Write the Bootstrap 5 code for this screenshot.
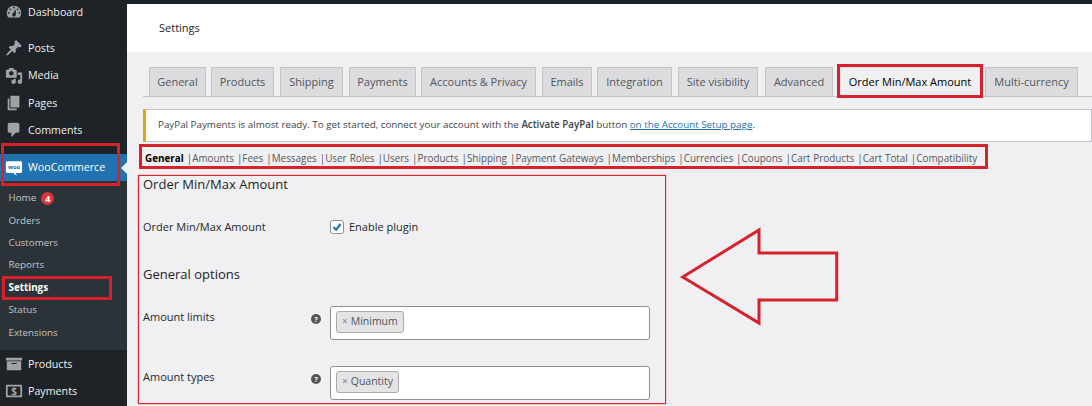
<!DOCTYPE html>
<html lang="en"><head><meta charset="utf-8"><title>Settings</title>
<link href="https://cdn.jsdelivr.net/npm/bootstrap@5.3.0/dist/css/bootstrap.min.css" rel="stylesheet">
<style>
html,body{height:406px;overflow:hidden}
body{background:#f0f0f3;font-family:"Open Sans","Noto Sans",sans-serif;font-size:11px;color:#3c434a;position:relative;width:1092px}
.wp-side{width:127px;height:406px;background:#1d2327;flex:none}
.wp-item{height:27.4px;color:#eef0f1;font-size:10.7px;padding-left:28px;position:relative;text-decoration:none}
.wp-item svg{position:absolute;left:5px;top:5px;width:18px;height:18px;fill:#9ea3a8}
.wp-first{height:24px;margin-bottom:10.2px}
.wp-first svg{top:3px}
.wp-active{background:#2271b1;color:#fff;margin-top:9.9px;height:27px}
.wp-active::after{content:"";position:absolute;right:0;top:8px;border:6px solid transparent;border-right-color:#f0f0f3;border-left:0}
.wp-sub{background:#2c3338;padding:6.6px 0 5.9px;height:169.4px}
.wp-sublink{height:22.5px;padding-left:8.5px;font-size:9.8px;color:#c3c4c7;text-decoration:none}
.wp-sublink.wp-on{color:#fff;font-weight:700}
.wp-count{background:#d63638;color:#fff;border-radius:50%;width:13px;height:13px;font-size:9px;font-weight:700;margin-left:5px;line-height:13px;text-align:center}
.wp-main{min-width:0}
.wp-strip{height:3.5px;background:#1d2327}
.wp-head{height:48.5px;background:#fff;padding-left:32px;font-size:11px;color:#1d2327}
.wc-tabs{margin:15px 0 0 16px;padding-left:6px;border-bottom:1px solid #c3c4c7;flex-wrap:nowrap;height:30px}
.wc-tabs .nav-link{background:#dcdcde;border:1px solid #c3c4c7;border-bottom:0;border-radius:0;color:#50575e;font-size:11px;font-weight:500;height:29px;padding:0;margin:0;display:flex;align-items:center;justify-content:center}
.wc-tabs .nav-link.active{background:#f0f0f3;color:#000;height:30px}
.wc-tabs .nav-item:nth-child(1) .nav-link{width:57px;margin-right:5px}
.wc-tabs .nav-item:nth-child(2) .nav-link{width:63px;margin-right:6px}
.wc-tabs .nav-item:nth-child(3) .nav-link{width:63px;margin-right:6px}
.wc-tabs .nav-item:nth-child(4) .nav-link{width:67px;margin-right:5px}
.wc-tabs .nav-item:nth-child(5) .nav-link{width:115px;margin-right:6px}
.wc-tabs .nav-item:nth-child(6) .nav-link{width:50px;margin-right:5px}
.wc-tabs .nav-item:nth-child(7) .nav-link{width:75px;margin-right:6px}
.wc-tabs .nav-item:nth-child(8) .nav-link{width:80px;margin-right:7px}
.wc-tabs .nav-item:nth-child(9) .nav-link{width:68px;margin-right:7px}
.wc-tabs .nav-item:nth-child(10) .nav-link{width:140px;margin-right:5px}
.wc-tabs .nav-item:nth-child(11) .nav-link{width:93px}
.wc-notice{margin:12px 0 0 16px;height:33px;background:#fff;border:1px solid #c3c4c7;border-left:3px solid #dba617;padding-left:12px;font-size:9.8px;color:#3c434a}
.wc-notice a,.wc-subnav a{color:#2271b1}
.wc-notice b{font-weight:600}
.wc-subnav{margin:9px 0 0 18px;height:14px;font-size:9.9px;white-space:nowrap;color:#50575e;line-height:14px;word-spacing:.45px}
.wc-subnav a{text-decoration:none}
.wc-subnav .wc-here{color:#000;font-weight:700}
.wc-form{margin:10px 0 0 16px;width:507px;font-size:11px;color:#23282d}
.wc-title{font-size:13px;font-weight:500;color:#1d2327;margin:0;line-height:18px}
.wc-row{display:flex}
.wc-gap-a{margin-top:26px}
.wc-gap-b{margin-top:29px}
.wc-gap-c{margin-top:23px}
.wc-gap-d{margin-top:26px}
.wc-label{width:187px;display:flex;justify-content:space-between;padding-right:9px;font-weight:400}
.wc-label-top{padding-top:3.5px}
.wc-help{width:10px;height:10px;margin-top:4.5px;fill:#555}
.wc-check{width:14px!important;height:14px;margin:0 5px 0 0!important;border:1px solid #8c8f94;border-radius:2px;background-color:#fff!important;border-color:#8c8f94!important;flex:none;background-size:12px;background-image:url("data:image/svg+xml,%3Csvg xmlns='http://www.w3.org/2000/svg' viewBox='0 0 20 20'%3E%3Cpath fill='none' stroke='%232271b1' stroke-width='3.500' d='M4 10l4.500 4.500L16 5'/%3E%3C/svg%3E")!important}
.wc-box{width:320px;height:34px;background:#fff;border:1px solid #8c8f94;border-radius:3px;padding:4px 5px}
.wc-tag{background:#e4e4e4;border:1px solid #aaa;border-radius:3px;height:22px;padding:0 5px;display:inline-flex;align-items:center;gap:3px;color:#50575e;font-size:10.5px}
.wc-x{color:#888;font-size:10px}
.mk-box{position:absolute;border:3px solid #d7222e;pointer-events:none}
.mk-woo{left:1px;top:143px;width:119px;height:43px}
.mk-set{left:2px;top:276px;width:110px;height:24px}
.mk-tab{left:837px;top:64px;width:146px;height:34px}
.mk-nav{left:139px;top:144px;width:849px;height:25px}
.mk-form{left:138px;top:175px;width:528px;height:229px;border:1px solid #e0202c;box-shadow:0 0 1px #e0202c}
.mk-arrow{position:absolute;left:678px;top:226px;width:164px;height:102px}
</style></head>
<body class="d-flex">
<aside class="wp-side d-flex flex-column">
<a class="wp-item wp-first d-flex align-items-center"><svg viewBox="0 0 20 20"><path d="M3.76 16h12.48c1.1-1.37 1.76-3.11 1.76-5 0-4.42-3.58-8-8-8s-8 3.58-8 8c0 1.89.66 3.63 1.76 5zM10 4c.55 0 1 .45 1 1s-.45 1-1 1-1-.45-1-1 .45-1 1-1zM6 6c.55 0 1 .45 1 1s-.45 1-1 1-1-.45-1-1 .45-1 1-1zm8 0c.55 0 1 .45 1 1s-.45 1-1 1-1-.45-1-1 .45-1 1-1zm-5.37 5.55L12 7v6c0 1.1-.9 2-2 2s-2-.9-2-2c0-.57.24-1.08.63-1.45zM4 10c.55 0 1 .45 1 1s-.45 1-1 1-1-.45-1-1 .45-1 1-1zm12 0c.55 0 1 .45 1 1s-.45 1-1 1-1-.45-1-1 .45-1 1-1z"/></svg>Dashboard</a>
<a class="wp-item d-flex align-items-center"><svg viewBox="0 0 20 20"><path d="M10.44 3.02l1.82-1.82 6.36 6.35-1.83 1.82c-1.05-.68-2.48-.57-3.41.36l-.75.75c-.92.93-1.04 2.35-.35 3.41l-1.83 1.82-2.41-2.41-2.8 2.79c-.42.42-3.38 2.71-3.8 2.29s1.86-3.39 2.28-3.81l2.79-2.79L4.1 9.36l1.83-1.82c1.05.69 2.48.57 3.4-.36l.75-.75c.93-.92 1.05-2.35.36-3.41z"/></svg>Posts</a>
<a class="wp-item d-flex align-items-center"><svg viewBox="0 0 20 20"><path d="M13 11V4c0-.55-.45-1-1-1h-1.67L9 1H5L3.67 3H2c-.55 0-1 .45-1 1v7c0 .55.45 1 1 1h10c.55 0 1-.45 1-1zM7 4.5c1.38 0 2.5 1.12 2.5 2.5S8.38 9.5 7 9.5 4.5 8.38 4.5 7 5.62 4.5 7 4.5zM14 6h5v10.5c0 1.38-1.12 2.5-2.5 2.5S14 17.88 14 16.5s1.12-2.5 2.5-2.5c.17 0 .34.02.5.05V9h-3V6zm-4 8.05V13h2v3.5c0 1.38-1.12 2.5-2.5 2.5S7 17.88 7 16.5 8.12 14 9.5 14c.17 0 .34.02.5.05z"/></svg>Media</a>
<a class="wp-item d-flex align-items-center"><svg viewBox="0 0 20 20"><path d="M6 15V2h10v13H6zm-1 1h8v2H3V5h2v11z"/></svg>Pages</a>
<a class="wp-item d-flex align-items-center"><svg viewBox="0 0 20 20"><path d="M5 2h9c1.1 0 2 .9 2 2v7c0 1.1-.9 2-2 2h-2l-5 5v-5H5c-1.1 0-2-.9-2-2V4c0-1.1.9-2 2-2z"/></svg>Comments</a>
<a class="wp-item wp-active d-flex align-items-center"><svg viewBox="0 0 20 20"><path style="fill:#fff" d="M2.5 2.5h15a1.5 1.5 0 0 1 1.5 1.5v10a1.5 1.5 0 0 1-1.5 1.5H12l1 3-4-3H2.500A1.500 1.500 0 0 1 1 14V4a1.500 1.500 0 0 1 1.500-1.500z"/><text x="10" y="11.500" text-anchor="middle" font-size="6.500" font-weight="700" style="fill:#2271b1">woo</text></svg>WooCommerce</a>
<div class="wp-sub d-flex flex-column">
<a class="wp-sublink d-flex align-items-center">Home<span class="wp-count">4</span></a>
<a class="wp-sublink d-flex align-items-center">Orders</a>
<a class="wp-sublink d-flex align-items-center">Customers</a>
<a class="wp-sublink d-flex align-items-center">Reports</a>
<a class="wp-sublink wp-on d-flex align-items-center">Settings</a>
<a class="wp-sublink d-flex align-items-center">Status</a>
<a class="wp-sublink d-flex align-items-center">Extensions</a>
</div>
<a class="wp-item d-flex align-items-center"><svg viewBox="0 0 20 20"><path d="M19 3v3H1V3h18zM2 7h16v10H2V7zm11 3V9H7v1h6z"/></svg>Products</a>
<a class="wp-item d-flex align-items-center"><svg viewBox="0 0 20 20"><path fill-rule="evenodd" d="M2 3h16a1 1 0 0 1 1 1v12a1 1 0 0 1-1 1H2a1 1 0 0 1-1-1V4a1 1 0 0 1 1-1zm1 2v10h14V5z"/><text x="10" y="14" text-anchor="middle" font-size="11" font-weight="700">$</text></svg>Payments</a>
</aside>
<main class="wp-main flex-grow-1">
<div class="wp-strip"></div>
<div class="wp-head d-flex align-items-center">Settings</div>
<ul class="nav nav-tabs wc-tabs">
<li class="nav-item"><a class="nav-link">General</a></li>
<li class="nav-item"><a class="nav-link">Products</a></li>
<li class="nav-item"><a class="nav-link">Shipping</a></li>
<li class="nav-item"><a class="nav-link">Payments</a></li>
<li class="nav-item"><a class="nav-link">Accounts &amp; Privacy</a></li>
<li class="nav-item"><a class="nav-link">Emails</a></li>
<li class="nav-item"><a class="nav-link">Integration</a></li>
<li class="nav-item"><a class="nav-link">Site visibility</a></li>
<li class="nav-item"><a class="nav-link">Advanced</a></li>
<li class="nav-item"><a class="nav-link active">Order Min/Max Amount</a></li>
<li class="nav-item"><a class="nav-link">Multi-currency</a></li>
</ul>
<div class="wc-notice d-flex align-items-center"><span>PayPal Payments is almost ready. To get started, connect your account with the <b>Activate PayPal</b> button <a href="#">on the Account Setup page</a>.</span></div>
<div class="wc-subnav"><span class="wc-here">General</span> |<a>Amounts</a> |<a>Fees</a> |<a>Messages</a> |<a>User Roles</a> |<a>Users</a> |<a>Products</a> |<a>Shipping</a> |<a>Payment Gateways</a> |<a>Memberships</a> |<a>Currencies</a> |<a>Coupons</a> |<a>Cart Products</a> |<a>Cart Total</a> |<a>Compatibility</a></div>
<section class="wc-form">
<h2 class="wc-title">Order Min/Max Amount</h2>
<div class="wc-row wc-gap-a"><div class="wc-label">Order Min/Max Amount</div><div class="d-flex align-items-center"><input class="form-check-input wc-check" type="checkbox" checked aria-label="Enable plugin"><span>Enable plugin</span></div></div>
<h2 class="wc-title wc-gap-b">General options</h2>
<div class="wc-row wc-gap-c"><div class="wc-label wc-label-top"><span>Amount limits</span><svg class="wc-help" viewBox="0 0 20 20"><circle cx="10" cy="10" r="10"/><text x="10" y="15.500" text-anchor="middle" font-size="15" font-weight="700" style="fill:#fff">?</text></svg></div><div class="wc-box"><span class="wc-tag"><span class="wc-x">×</span>Minimum</span></div></div>
<div class="wc-row wc-gap-d"><div class="wc-label wc-label-top"><span>Amount types</span><svg class="wc-help" viewBox="0 0 20 20"><circle cx="10" cy="10" r="10"/><text x="10" y="15.500" text-anchor="middle" font-size="15" font-weight="700" style="fill:#fff">?</text></svg></div><div class="wc-box"><span class="wc-tag"><span class="wc-x">×</span>Quantity</span></div></div>
</section>
</main>
<div class="mk-box mk-woo"></div><div class="mk-box mk-set"></div><div class="mk-box mk-tab"></div><div class="mk-box mk-nav"></div><div class="mk-box mk-form"></div>
<svg class="mk-arrow" viewBox="678 226 164 102"><path d="M682.700 277 759 230V253H836.700V300H759V323Z" fill="none" stroke="#d7222e" stroke-width="3"/></svg>
</body></html>
